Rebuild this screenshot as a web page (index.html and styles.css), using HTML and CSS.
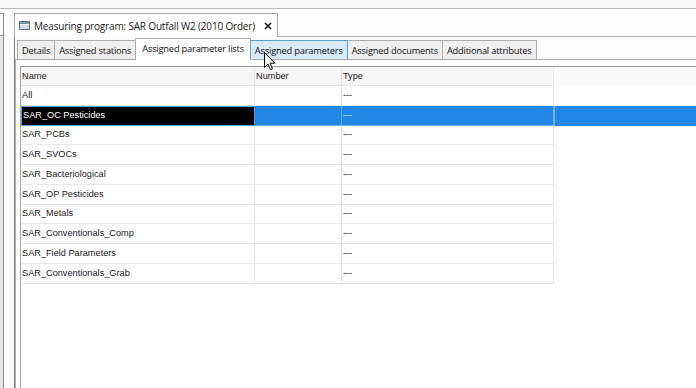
FILE: index.html
```html
<!DOCTYPE html>
<html lang="en">
  <head>
    <meta charset="UTF-8" />
    <title>Measuring program: SAR Outfall W2 (2010 Order)</title>
    <link rel="stylesheet" href="styles.css">
  </head>
  <body>
    <div class="topbar"></div>

    <div class="workspace">
      <!-- left docked pane, mostly off screen -->
      <div class="side">
        <div class="side-head"></div>
      </div>

      <div class="doc">
        <div class="doc-tabs">
          <div class="doc-tab">
            <svg class="doc-icon" width="11" height="9" viewBox="0 0 11 9">
              <rect x="0.5" y="0.5" width="10" height="8" fill="#fff" stroke="#5a6f8c" />
              <rect x="1" y="1" width="9" height="2" fill="#7f93ad" />
              <line x1="1" y1="5" x2="10" y2="5" stroke="#a9b6c7" />
              <line x1="1" y1="7" x2="10" y2="7" stroke="#a9b6c7" />
            </svg>
            <span class="doc-title">Measuring program: SAR Outfall W2 (2010 Order)</span>
            <svg class="close" width="8" height="8" viewBox="0 0 8 8">
              <path d="M1 1 L7 7 M7 1 L1 7" stroke="#111" stroke-width="1.6" />
            </svg>
          </div>
        </div>

        <div class="doc-body">
          <div class="tabs">
            <div class="tab">Details</div>
            <div class="tab">Assigned stations</div>
            <div class="tab active">Assigned parameter lists</div>
            <div class="tab hover">Assigned parameters</div>
            <div class="tab">Assigned documents</div>
            <div class="tab">Additional attributes</div>
          </div>

          <div class="panel">
            <div class="grid">
              <div class="row head">
                <div class="cell">Name</div>
                <div class="cell">Number</div>
                <div class="cell">Type</div>
                <div class="cell fill"></div>
              </div>
              <div class="row">
                <div class="cell">All</div>
                <div class="cell"></div>
                <div class="cell">---</div>
                <div class="cell fill"></div>
              </div>
              <div class="row selected">
                <div class="cell editing">SAR_OC Pesticides</div>
                <div class="cell"></div>
                <div class="cell">---</div>
                <div class="cell fill"></div>
              </div>
              <div class="row">
                <div class="cell">SAR_PCBs</div>
                <div class="cell"></div>
                <div class="cell">---</div>
                <div class="cell fill"></div>
              </div>
              <div class="row">
                <div class="cell">SAR_SVOCs</div>
                <div class="cell"></div>
                <div class="cell">---</div>
                <div class="cell fill"></div>
              </div>
              <div class="row">
                <div class="cell">SAR_Bacteriological</div>
                <div class="cell"></div>
                <div class="cell">---</div>
                <div class="cell fill"></div>
              </div>
              <div class="row">
                <div class="cell">SAR_OP Pesticides</div>
                <div class="cell"></div>
                <div class="cell">---</div>
                <div class="cell fill"></div>
              </div>
              <div class="row">
                <div class="cell">SAR_Metals</div>
                <div class="cell"></div>
                <div class="cell">---</div>
                <div class="cell fill"></div>
              </div>
              <div class="row">
                <div class="cell">SAR_Conventionals_Comp</div>
                <div class="cell"></div>
                <div class="cell">---</div>
                <div class="cell fill"></div>
              </div>
              <div class="row">
                <div class="cell">SAR_Field Parameters</div>
                <div class="cell"></div>
                <div class="cell">---</div>
                <div class="cell fill"></div>
              </div>
              <div class="row">
                <div class="cell">SAR_Conventionals_Grab</div>
                <div class="cell"></div>
                <div class="cell">---</div>
                <div class="cell fill"></div>
              </div>
            </div>
          </div>
        </div>
      </div>
    </div>

    <!-- mouse pointer over the hovered tab -->
    <svg class="cursor" width="12" height="19" viewBox="0 0 12 19">
      <path d="M0.5 0.5 L0.5 15.5 L4 12 L6.5 17.5 L8.5 16.6 L6 11.2 L10.8 11.2 Z" fill="#fff" stroke="#000" stroke-width="1" stroke-linejoin="round" />
    </svg>
  </body>
</html>
```

FILE: styles.css
```css
* {
  box-sizing: border-box;
}

body {
  margin: 0;
  height: 100vh;
  overflow: hidden;
  background-color: #fdfdfd;
  font-family: "Open Sans", "Noto Sans", sans-serif;
  color: #000;
  position: relative;
}

.topbar {
  height: 9px;
  border-bottom: 1px solid #b8b8b8;
  background-color: #f9f9f9;
}

.workspace {
  display: flex;
  height: calc(100vh - 9px);
  padding-top: 4px;
}

/* Left pane */
.side {
  width: 4px;
  border-top: 1px solid #9a9a9a;
  border-right: 1px solid #8a8a8a;
  background-color: #e4e4e4;
}

.side-head {
  height: 22px;
  border-bottom: 1px solid #9a9a9a;
  background-color: #fbfbfb;
}

/* Document window */
.doc {
  flex: 1;
  margin-left: 10px;
  display: flex;
  flex-direction: column;
}

.doc-tabs {
  display: flex;
  border-bottom: 1px solid #b4b4b4;
}

.doc-tab {
  height: 24px;
  margin-bottom: -1px;
  padding: 0 4px;
  display: flex;
  align-items: center;
  border: 1px solid #a6a6a6;
  border-bottom: none;
  background-color: #fff;
}

.doc-icon {
  margin-right: 4px;
}

.doc-title {
  font-size: 10px;
  letter-spacing: -0.17px;
  color: #1a1a1a;
}

.close {
  margin-left: 9px;
  margin-right: 1px;
}

.doc-body {
  flex: 1;
  display: flex;
  flex-direction: column;
  border-left: 1px solid #7d7d7d;
}

/* Inner tabs */
.tabs {
  display: flex;
  align-items: flex-end;
  padding: 1px 0 0 2px;
}

.tab {
  height: 19px;
  padding: 0 4px;
  display: flex;
  align-items: center;
  border: 1px solid #adadad;
  border-bottom: none;
  margin-right: -1px;
  background-color: #efefef;
  font-size: 9.3px;
  letter-spacing: -0.2px;
  color: #111;
}

.tab.active {
  position: relative;
  height: 22px;
  margin-bottom: -1px;
  padding: 0 6px 2px;
  background-color: #fff;
}

.tab.hover {
  position: relative;
  border-color: #5f9fd8;
  background-color: #d9ebfa;
}

.panel {
  flex: 1;
  padding: 6px 0 0 4px;
  border-top: 1px solid #adadad;
  border-left: 1px solid #b0b0b0;
  background-color: #fff;
}

/* Parameter list grid */
.grid {
  height: 100%;
  border-top: 1px solid #9c9c9c;
  border-left: 1px solid #a8a8a8;
  font-family: "Liberation Sans", Arial, sans-serif;
  font-size: 9.2px;
  color: #1a1a1a;
}

.row {
  display: grid;
  grid-template-columns: 234px 87px 212px 1fr;
  height: 19.75px;
}

.row.head {
  height: 19px;
}

.cell {
  padding: 0 1px 1px;
  display: flex;
  align-items: center;
  white-space: nowrap;
  border-right: 1px solid #e8e8e8;
  border-bottom: 1px solid #e8e8e8;
}

.cell.fill {
  border-right: none;
  border-bottom: none;
}

.head .cell {
  background-color: #f6f6f6;
  border-color: #e4e4e4;
}

.head .cell.fill {
  background-color: #fbfbfb;
}

.selected .cell {
  background-color: #2187e7;
  border-color: #6aaeee;
  color: #dfeefc;
}

.selected .cell.fill {
  border-left: 1px solid #7cb8f0;
}

.selected .cell.editing {
  background-color: #000;
  color: #fff;
  border: 1px solid #4f9be6;
}

.cursor {
  position: absolute;
  left: 264px;
  top: 52px;
}
```
